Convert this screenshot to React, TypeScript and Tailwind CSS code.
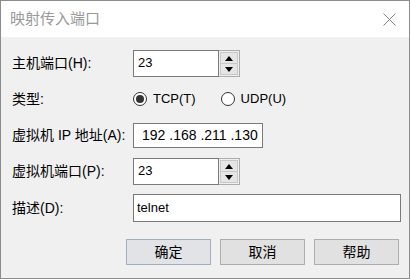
import React from "react";

const FONT = "font-['Liberation_Sans','Noto_Sans_CJK_SC',sans-serif]";

function Spin({ value }: { value: string }) {
  return (
    <div className="flex h-[27px]">
      <div className="flex h-full w-[86px] items-center border border-[#7a7a7a] bg-white pb-[2px] pl-[4px] text-[13px] text-black">
        {value}
      </div>
      <div className="flex h-full w-[21px] flex-col border border-[#acacac] border-l-0 bg-[#f0f0f0] p-px">
        <div className="flex flex-1 items-center justify-center border border-[#c8c8c8] bg-[#e5e5e5]">
          <svg width="8" height="5" viewBox="0 0 8 5">
            <path d="M0 5 L4 0 L8 5 Z" fill="#000" />
          </svg>
        </div>
        <div className="flex flex-1 items-center justify-center border border-t-0 border-[#c8c8c8] bg-[#e5e5e5]">
          <svg width="8" height="5" viewBox="0 0 8 5">
            <path d="M0 0 L4 5 L8 0 Z" fill="#000" />
          </svg>
        </div>
      </div>
    </div>
  );
}

function Radio({ label, checked }: { label: string; checked?: boolean }) {
  return (
    <div className="flex items-center gap-[6px]">
      <div className="flex h-[14px] w-[14px] items-center justify-center rounded-full border border-[#333] bg-white">
        {checked && <div className="h-[8px] w-[8px] rounded-full bg-[#333]" />}
      </div>
      <span className="text-[13px] text-black">{label}</span>
    </div>
  );
}

function Label({ children }: { children: React.ReactNode }) {
  return <div className="w-[121px] shrink-0 text-[14px] text-black">{children}</div>;
}

export default function App() {
  return (
    <div className={`h-[279px] w-[411px] bg-white ${FONT}`}>
      <div className="flex h-[279px] w-[410px] flex-col border border-[#8c8c8c]">
        <div className="flex h-[36px] shrink-0 items-center justify-between bg-white pl-[9px] pr-[13px]">
          <span className="text-[15px] text-[#999]">映射传入端口</span>
          <svg width="13" height="13" viewBox="0 0 13 13">
            <path d="M0.5 0.5 L12.5 12.5 M12.5 0.5 L0.5 12.5" stroke="#808080" strokeWidth="1" />
          </svg>
        </div>

        <div className="flex flex-1 flex-col bg-[#f0f0f0] pl-[11px] pt-[13px]">
          <div className="flex h-[27px] items-center">
            <Label>主机端口(H):</Label>
            <Spin value="23" />
          </div>

          <div className="mt-[11px] flex h-[22px] items-center">
            <Label>类型:</Label>
            <div className="flex items-center gap-[25px]">
              <Radio label="TCP(T)" checked />
              <Radio label="UDP(U)" />
            </div>
          </div>

          <div className="mt-[13px] flex h-[25px] items-center">
            <Label>虚拟机 IP 地址(A):</Label>
            <div className="flex h-full w-[130px] items-center whitespace-pre border border-[#7a7a7a] bg-white pl-[8px] text-[14px] text-black">
              192 .168 .211 .130
            </div>
          </div>

          <div className="mt-[10px] flex h-[27px] items-center">
            <Label>虚拟机端口(P):</Label>
            <Spin value="23" />
          </div>

          <div className="mt-[9px] flex h-[28px] items-center">
            <Label>描述(D):</Label>
            <div className="flex h-full w-[268px] items-start border border-[#7a7a7a] bg-white pl-[3px] pt-[3px] text-[13px] text-black">
              telnet
            </div>
          </div>

          <div className="mt-[17px] flex justify-end gap-[9px] pr-[10px]">
            <button className="h-[26px] w-[85px] border border-[#9fb0c2] bg-[#e1e3e6] text-[14px] text-black">
              确定
            </button>
            <button className="h-[26px] w-[85px] border border-[#adadad] bg-[#e1e1e1] text-[14px] text-black">
              取消
            </button>
            <button className="h-[26px] w-[85px] border border-[#adadad] bg-[#e1e1e1] text-[14px] text-black">
              帮助
            </button>
          </div>
        </div>
      </div>
    </div>
  );
}
